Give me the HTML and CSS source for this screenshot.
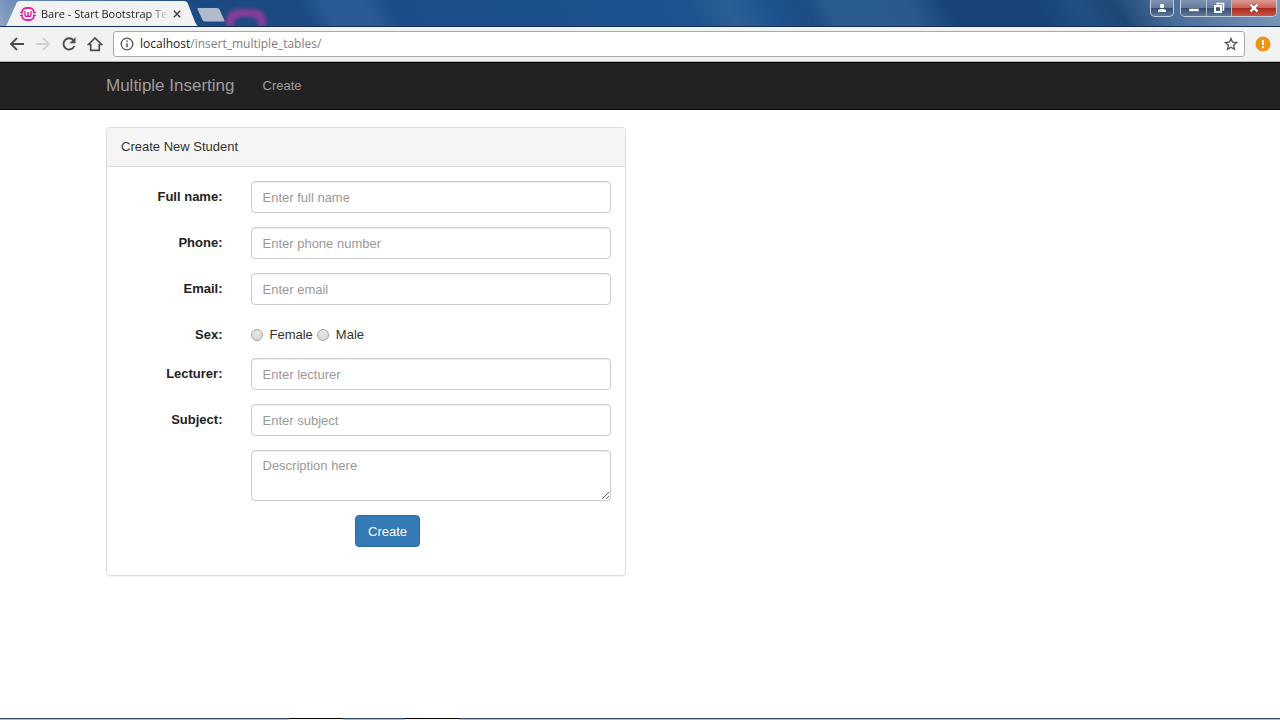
FILE: index.html
```
<!DOCTYPE html>
<html lang="en">
<head>
    <meta charset="UTF-8">
    <meta name="viewport" content="width=device-width, initial-scale=1">
    <title>Bare - Start Bootstrap Template</title>
    <link rel="stylesheet" href="styles.css">
</head>
<body>
    <!-- Browser window -->
    <header class="browser">
        <div class="titlebar">
            <div class="tab">
                <svg class="tab-shape" viewBox="0 0 194 27" aria-hidden="true">
                    <path d="M0 27 Q2 25 3 22 L11 4 Q12 1 15 1 H179 Q182 1 183 4 L190 22 Q192 26 194 27 Z" fill="#f2f2f2"/>
                </svg>
                <svg class="tab-icon" viewBox="0 0 16 16" aria-hidden="true">
                    <rect x="2" y="2" width="12" height="12" rx="4.500" fill="#fff" stroke="#f0189c" stroke-width="1.800"/>
                    <path d="M0 8h3M13 8h3" stroke="#fff" stroke-width="1"/>
                    <path d="M0 6.500h2.500M0 9.500h2.500M13.500 6.500H16M13.500 9.500H16" stroke="#f0189c" stroke-width="1"/>
                    <path d="M5 5v3.500Q5 10.500 6.500 10.500T8 8.500V6V8.500Q8 10.500 9.500 10.500T11 8.500V5" fill="none" stroke="#f0189c" stroke-width="1.400"/>
                </svg>
                <span class="tab-title">Bare - Start Bootstrap Te</span>
                <button class="tab-close" type="button" aria-label="Close tab">
                    <svg width="8" height="8" viewBox="0 0 8 8"><path d="M.8.8l6.400 6.400M7.200.8L.8 7.200" stroke="#444" stroke-width="1.500"/></svg>
                </button>
            </div>
            <button class="new-tab" type="button" aria-label="New tab">
                <svg width="32" height="16" viewBox="0 0 32 16"><path d="M2 .5h19q2 0 3 2l5 11q.5 1.500-1.500 1.500H9q-2 0-3-2L1 2q-.5-1.500 1-1.500z" fill="#b0bccd" stroke="#274c7c"/></svg>
            </button>
            <svg class="glow" viewBox="0 0 44 18" aria-hidden="true">
                <path d="M6 18V14Q6 4 16 4H28Q38 4 38 14V18" fill="none" stroke="#8a3d9a" stroke-width="8"/>
            </svg>
            <div class="window-buttons">
                <button class="win-btn user" type="button" aria-label="Profile">
                    <svg width="10" height="10" viewBox="0 0 10 10"><circle cx="5" cy="3" r="2.200" fill="#fff"/><path d="M1 9V7.500Q1 6 5 6T9 7.500V9z" fill="#fff"/></svg>
                </button>
                <div class="win-group">
                    <button class="win-btn minimize" type="button" aria-label="Minimize">
                        <svg width="12" height="12" viewBox="0 0 12 12"><rect x="1" y="6.500" width="10" height="3" fill="#fff" stroke="#4c5a70" stroke-width=".6"/></svg>
                    </button>
                    <button class="win-btn restore" type="button" aria-label="Restore">
                        <svg width="12" height="12" viewBox="0 0 12 12"><path d="M4 2.500V1.500H10.500V8H9.500" fill="none" stroke="#fff" stroke-width="1.500"/><rect x="2" y="4" width="6" height="6" fill="none" stroke="#fff" stroke-width="2"/></svg>
                    </button>
                    <button class="win-btn close" type="button" aria-label="Close">
                        <svg width="12" height="12" viewBox="0 0 12 12"><path d="M2.500 2.500l7 7M9.500 2.500l-7 7" stroke="#5a2522" stroke-width="3.800"/><path d="M2.500 2.500l7 7M9.500 2.500l-7 7" stroke="#fff" stroke-width="2.500"/></svg>
                    </button>
                </div>
            </div>
        </div>
        <div class="toolbar">
            <button class="tool-btn" type="button" aria-label="Back">
                <svg viewBox="0 0 16 16"><path d="M15 8H2M8 2L2 8l6 6" fill="none" stroke="#4d4d4d" stroke-width="1.800"/></svg>
            </button>
            <button class="tool-btn" type="button" aria-label="Forward" disabled>
                <svg viewBox="0 0 16 16"><path d="M1 8h13M8 2l6 6-6 6" fill="none" stroke="#d0d0d0" stroke-width="1.800"/></svg>
            </button>
            <button class="tool-btn" type="button" aria-label="Reload">
                <svg viewBox="0 0 16 16"><path d="M13.300 10A5.600 5.600 0 1 1 12.300 4.200" fill="none" stroke="#4d4d4d" stroke-width="1.900"/><path d="M14.500 1v6.200H8.500z" fill="#4d4d4d"/></svg>
            </button>
            <button class="tool-btn" type="button" aria-label="Home">
                <svg viewBox="0 0 16 16"><path d="M1.500 8.500L8 2l6.500 6.500H12.300V14.300H3.700V8.500z" fill="none" stroke="#4d4d4d" stroke-width="1.700"/></svg>
            </button>
            <div class="address">
                <svg class="info" viewBox="0 0 14 14" aria-hidden="true"><circle cx="7" cy="7" r="5.800" fill="none" stroke="#555" stroke-width="1.300"/><path d="M7 6.300V10.300M7 3.600V5.100" stroke="#555" stroke-width="1.500"/></svg>
                <a class="url" href="#"><span class="host">localhost</span>/insert_multiple_tables/</a>
                <button class="star" type="button" aria-label="Bookmark">
                    <svg viewBox="0 0 14 14"><path d="M7 1.500l1.600 3.700 4 .4-3 2.700.9 4L7 10.200l-3.500 2.100.9-4-3-2.700 4-.4z" fill="none" stroke="#555" stroke-width="1.300"/></svg>
                </button>
            </div>
            <button class="tool-btn" type="button" aria-label="Update">
                <svg viewBox="0 0 16 16"><circle cx="8" cy="8" r="7.500" fill="#ee960f"/><path d="M8 4v5M8 10.300v2" stroke="#fff" stroke-width="2"/></svg>
            </button>
        </div>
    </header>

    <!-- Navigation -->
    <nav class="navbar">
        <div class="container">
            <a class="navbar-brand" href="#">Multiple Inserting</a>
            <a class="navbar-link" href="#">Create</a>
        </div>
    </nav>

    <!-- Page Content -->
    <main class="container">
        <div class="col-half">
            <div class="panel">
                <div class="panel-heading">Create New Student</div>
                <form class="panel-body">
                    <div class="form-group">
                        <label class="control-label" for="fullname">Full name:</label>
                        <div class="field"><input class="form-control" type="text" id="fullname" placeholder="Enter full name"></div>
                    </div>
                    <div class="form-group">
                        <label class="control-label" for="phone">Phone:</label>
                        <div class="field"><input class="form-control" type="text" id="phone" placeholder="Enter phone number"></div>
                    </div>
                    <div class="form-group">
                        <label class="control-label" for="email">Email:</label>
                        <div class="field"><input class="form-control" type="email" id="email" placeholder="Enter email"></div>
                    </div>
                    <div class="form-group" role="radiogroup" aria-labelledby="sex-label">
                        <span class="control-label" id="sex-label">Sex:</span>
                        <div class="field radios">
                            <label><input type="radio" name="sex" value="female">Female</label>
                            <label><input type="radio" name="sex" value="male">Male</label>
                        </div>
                    </div>
                    <div class="form-group">
                        <label class="control-label" for="lecturer">Lecturer:</label>
                        <div class="field"><input class="form-control" type="text" id="lecturer" placeholder="Enter lecturer"></div>
                    </div>
                    <div class="form-group">
                        <label class="control-label" for="subject">Subject:</label>
                        <div class="field"><input class="form-control" type="text" id="subject" placeholder="Enter subject"></div>
                    </div>
                    <div class="form-group">
                        <div class="field"><textarea class="form-control" rows="2" aria-label="Description" placeholder="Description here"></textarea></div>
                    </div>
                    <div class="form-group">
                        <div class="actions"><button class="btn" type="submit">Create</button></div>
                    </div>
                </form>
            </div>
        </div>
    </main>

    <!-- Top edge of the taskbar -->
    <footer class="taskbar">
        <span class="task"></span>
        <span class="task"></span>
    </footer>
</body>
</html>
```
FILE: styles.css
```
* {
    box-sizing: border-box;
}

body {
    margin: 0;
    min-height: 100vh;
    display: flex;
    flex-direction: column;
    background: #fff;
    color: #333;
    font-family: "Liberation Sans", Arial, sans-serif;
    font-size: 13px;
    line-height: 18px;
}

a {
    text-decoration: none;
}

button {
    font-family: inherit;
    padding: 0;
    border: 0;
    background: none;
}

svg {
    display: block;
}

/* Browser window */
.titlebar {
    display: flex;
    align-items: flex-start;
    height: 27px;
    overflow: hidden;
    border-bottom: 1px solid #14305a;
    background: linear-gradient(60deg, #8fa3c6 0%, #6f8fba 2%, #1b4a84 16%, #1a4983 24%, #2a5b97 26%, #2a5b97 29%, #1b4d8a 31%, #1c5390 54%, #2a6096 57%, #1d5390 60%, #1b4d83 63%, #2a5c90 65%, #2a5a8c 71%, #17437a 74%, #17437a 81%, #214f82 84%, #1c4876 87%, #4a6e9a 91%, #7f9ab9 100%);
}

.tab {
    position: relative;
    display: flex;
    align-items: center;
    width: 194px;
    height: 27px;
    margin-left: 5px;
    padding: 1px 8px 0 15px;
}

.tab-shape {
    position: absolute;
    left: 0;
    top: 0;
    width: 194px;
    height: 27px;
}

.tab-icon {
    position: relative;
    flex: none;
    width: 16px;
    height: 16px;
}

.tab-title {
    position: relative;
    width: 128px;
    margin-left: 5px;
    white-space: nowrap;
    color: #222;
    font-family: "Open Sans", sans-serif;
    font-size: 11px;
    -webkit-mask-image: linear-gradient(to right, #000 84%, transparent);
    mask-image: linear-gradient(to right, #000 84%, transparent);
}

.tab-close {
    position: relative;
    margin-left: 4px;
}

.new-tab {
    margin: 7px 0 0 -3px;
}

.glow {
    width: 44px;
    height: 18px;
    margin: 9px 0 0 -4px;
    filter: blur(2px);
}

.window-buttons {
    display: flex;
    gap: 6px;
    margin: 0 3px 0 auto;
}

.win-group {
    display: flex;
    border: 1px solid #c3cddb;
    border-top: 0;
    border-radius: 0 0 5px 5px;
    overflow: hidden;
}

.win-btn {
    display: flex;
    align-items: center;
    justify-content: center;
    height: 16px;
    background: linear-gradient(#8193b2 0%, #64799b 50%, #354b70 51%, #62799e 100%);
}

.user {
    width: 24px;
    height: 17px;
    border: 1px solid #c3cddb;
    border-top: 0;
    border-radius: 0 0 5px 5px;
}

.minimize {
    width: 26px;
    border-right: 1px solid #aebbd0;
}

.restore {
    width: 25px;
    border-right: 1px solid #aebbd0;
}

.close {
    width: 44px;
    background: linear-gradient(#d99a93 0%, #c96257 50%, #a92a1b 51%, #c8564a 100%);
}

.toolbar {
    display: flex;
    align-items: center;
    gap: 10px;
    height: 35px;
    padding: 0 9px;
    background: #f2f2f2;
    border-bottom: 1px solid #b6b6b6;
}

.tool-btn svg {
    width: 16px;
    height: 16px;
}

.address {
    flex: 1;
    display: flex;
    align-items: center;
    gap: 6px;
    height: 26px;
    padding: 0 6px;
    border: 1px solid #a9a9a9;
    border-radius: 3px;
    background: #fff;
}

.info,
.star svg {
    width: 14px;
    height: 14px;
}

.url {
    flex: 1;
    color: #808080;
    font-family: "Open Sans", sans-serif;
    font-size: 12px;
}

.host {
    color: #222;
}

/* Grid */
.container {
    width: 100%;
    max-width: 1096px;
    margin: 0 auto;
    padding: 0 14px;
}

.col-half {
    width: calc(50% - 14px);
}

/* Navigation */
.navbar {
    margin-bottom: 17px;
    border: 1px solid #080808;
    border-width: 1px 0;
    background: #222;
}

.navbar .container {
    display: flex;
    align-items: center;
    gap: 28px;
    height: 46px;
}

.navbar-brand,
.navbar-link {
    color: #9d9d9d;
}

.navbar-brand {
    font-size: 17px;
}

/* Panel */
.panel {
    border: 1px solid #ddd;
    border-radius: 4px;
    box-shadow: 0 1px 1px rgba(0, 0, 0, .05);
}

.panel-heading {
    padding: 10px 14px;
    border-bottom: 1px solid #ddd;
    border-radius: 3px 3px 0 0;
    background: #f5f5f5;
}

.panel-body {
    padding: 14px;
}

.form-group {
    display: grid;
    grid-template-columns: repeat(12, 1fr);
    margin: 0 -14px 14px;
}

.control-label {
    grid-column: 1 / 4;
    padding: 7px 14px 0;
    color: #222;
    font-weight: bold;
    text-align: right;
}

.field {
    grid-column: 4 / 13;
    padding: 0 14px;
}

.form-control {
    display: block;
    width: 100%;
    height: 32px;
    padding: 6px 11px;
    border: 1px solid #ccc;
    border-radius: 4px;
    background: #fff;
    color: #555;
    font-family: inherit;
    font-size: 13px;
    line-height: 18px;
    box-shadow: inset 0 1px 1px rgba(0, 0, 0, .075);
}

.form-control::placeholder {
    color: #999;
}

textarea.form-control {
    height: 51px;
    resize: vertical;
}

.radios {
    display: flex;
    gap: 4px;
    padding-top: 7px;
}

.radios label {
    display: flex;
    align-items: center;
    gap: 7px;
}

.radios input {
    appearance: none;
    width: 12px;
    height: 12px;
    margin: 0;
    border: 1px solid #a3a3a3;
    border-radius: 50%;
    background: linear-gradient(#e8e8e8, #d8d8d8);
}

.radios input:checked {
    background: radial-gradient(#444 35%, #ddd 40%);
}

.actions {
    grid-column: 4 / 11;
    text-align: center;
}

.btn {
    height: 32px;
    padding: 0 12px;
    border: 1px solid #2e6da4;
    border-radius: 4px;
    background: #337ab7;
    color: #fff;
    font-size: 13px;
}

/* Taskbar */
.taskbar {
    display: flex;
    gap: 62px;
    height: 2px;
    margin-top: auto;
    padding-left: 289px;
    border-top: 1px solid #34495e;
    background: #b4c0cd;
}

.task {
    width: 54px;
    height: 2px;
    margin-top: -1px;
    border-top: 1px solid #000;
    background: #f4f4f4;
}
```
